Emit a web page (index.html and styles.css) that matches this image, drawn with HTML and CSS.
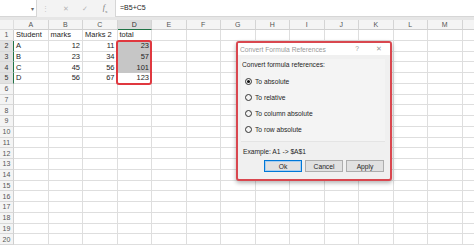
FILE: index.html
```html
<!DOCTYPE html>
<html lang="en">

<head>
    <meta charset="UTF-8">
    <meta name="viewport" content="width=device-width, initial-scale=1.0">
    <title>Convert Formula References</title>
    <link rel="stylesheet" href="styles.css">
</head>

<body>

    <div class="formula-bar">
        <div class="name-box"><span class="arrow">&#9662;</span></div>
        <div class="bar-tools">
            <span class="grip">&#8942;</span>
            <span class="tool">&#10005;</span>
            <span class="tool">&#10003;</span>
            <span class="tool fx"><i>f</i><sub>x</sub></span>
        </div>
        <div class="formula-input">=B5+C5</div>
    </div>

    <div class="sheet-wrap">
        <div class="sheet" id="sheet"></div>

        <!-- selection outline around D2:D5 -->
        <div class="range-mark"></div>

        <div class="dialog">
            <div class="dialog-title">
                <span>Convert Formula References</span>
                <span class="title-btns"><span>?</span><span class="close">&#10005;</span></span>
            </div>
            <div class="dialog-body">
                <div class="group">
                    <p class="group-label">Convert formula references:</p>
                    <label class="radio"><span class="dot checked"></span>To absolute</label>
                    <label class="radio"><span class="dot"></span>To relative</label>
                    <label class="radio"><span class="dot"></span>To column absolute</label>
                    <label class="radio"><span class="dot"></span>To row absolute</label>
                </div>
                <p class="example">Example: A1 -&gt; $A$1</p>
                <div class="buttons">
                    <button class="btn default">Ok</button>
                    <button class="btn">Cancel</button>
                    <button class="btn">Apply</button>
                </div>
            </div>
        </div>
    </div>

    <!-- build the grid from the table data -->
    <script>
        // last column is only partly visible, so it gets no letter
        const cols = ["A", "B", "C", "D", "E", "F", "G", "H", "I", "J", "K", "L", "M", ""];
        const data = [
            ["Student", "marks", "Marks 2", "total"],
            ["A", 12, 11, 23],
            ["B", 23, 34, 57],
            ["C", 45, 56, 101],
            ["D", 56, 67, 123]
        ];

        const sheet = document.getElementById('sheet');

        function addCell(cls, text) {
            let div = document.createElement('div');
            div.className = cls;
            if (text !== undefined) div.textContent = text;
            sheet.appendChild(div);
        }

        addCell('corner');
        cols.forEach(c => addCell(c === "D" ? 'col-head active' : 'col-head', c));

        for (let r = 1; r <= 20; r++) {
            addCell(r >= 2 && r <= 5 ? 'row-head active' : 'row-head', r);
            let row = data[r - 1] || [];
            cols.forEach((c, i) => {
                let val = row[i];
                let cls = 'cell';
                if (typeof val === 'number') cls += ' num';
                if (c === "D" && r >= 2 && r <= 4) cls += ' filled';
                addCell(cls, val);
            });
        }
    </script>

</body>

</html>
```

FILE: styles.css
```css
body {
    margin: 0;
    font-family: "Liberation Sans", Arial, sans-serif;
    background-color: #fff;
    color: #1e1e1e;
    width: 474px;
    height: 245px;
    overflow: hidden;
}

/* formula bar */
.formula-bar {
    display: flex;
    height: 17px;
    background-color: #f3f3f3;
    border-bottom: 3px solid #e6e6e6;
}

.name-box {
    width: 37px;
    background-color: #fff;
    border-right: 1px solid #d6d6d6;
    border-bottom: 1px solid #d6d6d6;
    display: flex;
    justify-content: flex-end;
    align-items: center;
    padding-right: 2px;
    box-sizing: border-box;
}

.arrow {
    font-size: 6px;
    color: #666;
}

.bar-tools {
    width: 78px;
    display: flex;
    align-items: center;
    font-size: 7px;
    color: #b5b5b5;
}

.grip {
    margin-left: 5px;
    width: 14px;
    color: #c8c8c8;
}

.tool {
    width: 20px;
    text-align: center;
}

.fx {
    color: #777;
    font-family: "Liberation Serif", serif;
    font-size: 8px;
}

.fx sub {
    font-size: 5px;
}

.formula-input {
    flex: 1;
    background-color: #fff;
    border-left: 1px solid #d6d6d6;
    border-bottom: 1px solid #d6d6d6;
    font-size: 7px;
    padding-left: 4px;
    line-height: 16px;
}

/* the grid */
.sheet-wrap {
    position: relative;
}

.sheet {
    display: grid;
    grid-template-columns: 14px repeat(14, 34.5px);
    grid-template-rows: 10px;
    grid-auto-rows: 10.75px;
    font-size: 7.5px;
}

.sheet > div {
    box-sizing: border-box;
    border-right: 1px solid #dedede;
    border-bottom: 1px solid #dedede;
    white-space: nowrap;
    overflow: hidden;
    display: flex;
    align-items: center;
}

.corner,
.col-head,
.row-head {
    background-color: #f4f4f4;
    color: #555;
    font-size: 7px;
}

.sheet > .col-head {
    justify-content: center;
    border-right-color: #d4d4d4;
    border-bottom-color: #cfcfcf;
}

.sheet > .row-head {
    justify-content: center;
    border-right-color: #cfcfcf;
    border-bottom-color: #d8d8d8;
}

.sheet > .col-head.active {
    background-color: #dcdcdc;
    color: #333;
    border-bottom: 1px solid #217346;
}

.sheet > .row-head.active {
    background-color: #e2e2e2;
    color: #333;
    border-right: 1px solid #217346;
}

.cell {
    padding: 0 2px;
}

.cell.num {
    justify-content: flex-end;
}

.sheet > .cell.filled {
    background-color: #c6c6c6;
    border-color: #c6c6c6;
}

.range-mark {
    position: absolute;
    left: 116px;
    top: 20px;
    width: 36px;
    height: 45px;
    border: 2px solid #e0383f;
    border-radius: 3px;
    box-sizing: border-box;
}

/* dialog */
.dialog {
    position: absolute;
    left: 236px;
    top: 21px;
    width: 156px;
    height: 140px;
    box-sizing: border-box;
    border: 2px solid #d9474f;
    border-radius: 3px;
    background-color: #f0f0f0;
    box-shadow: 0 2px 4px rgba(0, 0, 0, 0.3);
    font-size: 6.7px;
    color: #1e1e1e;
    overflow: hidden;
}

.dialog-title {
    height: 12px;
    background-color: #fff;
    color: #9a9a9a;
    display: flex;
    justify-content: space-between;
    align-items: center;
    padding: 0 8px 0 2px;
}

.title-btns {
    display: flex;
    gap: 17px;
    color: #999;
}

.dialog-body {
    padding: 4px 5px 0 3px;
}

.group {
    padding: 2px 0 4px 1px;
    background-color: #f4f4f4;
    border-bottom: 1px solid #e4e4e4;
}

.group-label {
    margin: 0 0 5px 0;
}

.radio {
    display: flex;
    align-items: center;
    height: 16px;
    padding-left: 3px;
}

.dot {
    width: 7px;
    height: 7px;
    border: 1px solid #333;
    border-radius: 50%;
    box-sizing: border-box;
    margin-right: 3px;
    display: flex;
    align-items: center;
    justify-content: center;
}

.dot.checked::after {
    content: "";
    width: 3px;
    height: 3px;
    border-radius: 50%;
    background-color: #111;
}

.example {
    margin: 6px 0 5px 2px;
}

.buttons {
    display: flex;
    justify-content: flex-end;
    gap: 3px;
    padding-right: 1px;
}

.btn {
    width: 38px;
    height: 12px;
    padding: 0;
    font-family: inherit;
    font-size: 6.7px;
    color: #1e1e1e;
    background-color: #e1e1e1;
    border: 1px solid #adadad;
}

.btn.default {
    border: 1px solid #0078d7;
    box-shadow: inset 0 0 0 1px #a9cdef;
}
```
